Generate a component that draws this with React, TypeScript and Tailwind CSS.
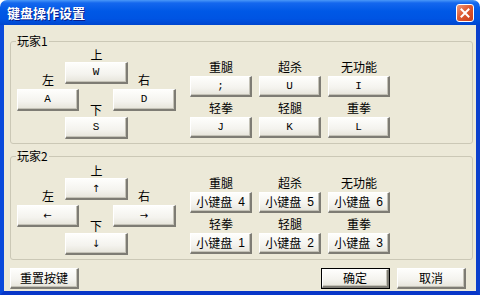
import React from "react";

const CJK = "font-['Noto_Sans_CJK_SC','Noto_Sans',sans-serif]";

function Btn({ children, w, h = "h-[22px]", mono = false }: { children: React.ReactNode; w: string; h?: string; mono?: boolean }) {
  return (
    <div
      className={`${w} ${h} flex items-center justify-center border border-r-2 border-b-2 border-t-white border-l-white border-r-[#7E7C74] border-b-[#7E7C74] bg-[linear-gradient(180deg,#FEFEFC_0%,#F4F3EE_60%,#E6E4DA_100%)] text-black ${
        mono ? "font-['Liberation_Mono',monospace] text-[11px]" : `${CJK} text-[12px]`
      } leading-none shadow-[inset_-1px_-1px_0_#C4C2B7]`}
    >
      {children}
    </div>
  );
}

function Arrow({ ch }: { ch: string }) {
  return <span className="font-['DejaVu_Sans',sans-serif] text-[10px] leading-none">{ch}</span>;
}

function Pad({ n }: { n: string }) {
  return (
    <span className="flex items-center">
      <span>小键盘</span>
      <span className="ml-[6px] font-['Liberation_Sans',sans-serif] text-[12px]">{n}</span>
    </span>
  );
}

type Keys = {
  up: React.ReactNode;
  left: React.ReactNode;
  right: React.ReactNode;
  down: React.ReactNode;
  grid: React.ReactNode[];
  mono: boolean;
};

function Group({ title, keys, pt, extraClass = "" }: { title: string; keys: Keys; pt: string; extraClass?: string }) {
  const labels1 = ["重腿", "超杀", "无功能"];
  const labels2 = ["轻拳", "轻腿", "重拳"];
  return (
    <fieldset className={`border border-[#CBC8B6] rounded-[3px] ${extraClass}`}>
      <legend className={`ml-[5px] px-[1px] text-[12px] leading-[14px] text-black ${CJK}`}>{title}</legend>
      <div className={`flex ${pt} pb-[4px] pl-[6px]`}>
        <div className={`w-[159px] flex flex-col text-[12px] ${CJK} text-black`}>
          <div className="h-[14px] leading-[14px] text-center">上</div>
          <div className="flex items-end h-[22px]">
            <div className="w-[48px] pl-[25px] h-[14px] leading-[14px] translate-y-[3px]">左</div>
            <Btn w="w-[63px]" mono={keys.mono}>{keys.up}</Btn>
            <div className="w-[48px] pl-[10px] h-[14px] leading-[14px] translate-y-[3px]">右</div>
          </div>
          <div className="flex items-end mt-[5px]">
            <Btn w="w-[62px]" mono={keys.mono}>{keys.left}</Btn>
            <div className="w-[34px] text-center h-[14px] leading-[14px] translate-y-[6px]">下</div>
            <Btn w="w-[63px]" mono={keys.mono}>{keys.right}</Btn>
          </div>
          <div className="flex mt-[6px] pl-[48px]">
            <Btn w="w-[63px]" mono={keys.mono}>{keys.down}</Btn>
          </div>
        </div>
        <div className={`ml-[14px] mt-[12px] flex flex-col text-[12px] ${CJK} text-black`}>
          <div className="grid grid-cols-[62px_62px_62px] gap-x-[7px]">
            {labels1.map((l) => (
              <div key={l} className="h-[14px] leading-[14px] text-center">{l}</div>
            ))}
            {keys.grid.slice(0, 3).map((k, i) => (
              <div key={i} className="mt-[2px]">
                <Btn w="w-[62px]" h="h-[21px]" mono={keys.mono}>{k}</Btn>
              </div>
            ))}
          </div>
          <div className="grid grid-cols-[62px_62px_62px] gap-x-[7px] mt-[4px]">
            {labels2.map((l) => (
              <div key={l} className="h-[14px] leading-[14px] text-center">{l}</div>
            ))}
            {keys.grid.slice(3, 6).map((k, i) => (
              <div key={i} className="mt-[2px]">
                <Btn w="w-[62px]" h="h-[21px]" mono={keys.mono}>{k}</Btn>
              </div>
            ))}
          </div>
        </div>
      </div>
    </fieldset>
  );
}

export default function App() {
  const p1: Keys = { up: "W", left: "A", right: "D", down: "S", grid: [";", "U", "I", "J", "K", "L"], mono: true };
  const p2: Keys = {
    up: <Arrow ch="↑" />,
    left: <Arrow ch="←" />,
    right: <Arrow ch="→" />,
    down: <Arrow ch="↓" />,
    grid: [<Pad n="4" />, <Pad n="5" />, <Pad n="6" />, <Pad n="1" />, <Pad n="2" />, <Pad n="3" />],
    mono: false,
  };
  return (
    <div className="w-[480px] h-[295px] bg-white flex flex-col overflow-hidden">
      <div className="h-[25px] shrink-0 rounded-t-[7px] flex items-center justify-between pl-[7px] pr-[6px] bg-[linear-gradient(180deg,#4A98F8_0%,#1467EE_12%,#0058E6_45%,#0054E3_75%,#0046CF_100%)]">
        <span className={`text-white font-bold text-[13px] leading-none ${CJK} [text-shadow:1px_1px_0_#0A1E8A]`}>键盘操作设置</span>
        <div className="w-[18px] h-[18px] rounded-[3px] border border-white bg-[linear-gradient(135deg,#EE9A7E_0%,#DE5A33_45%,#C83E1A_100%)] flex items-center justify-center">
          <svg width="10" height="10" viewBox="0 0 10 10">
            <path d="M1.5 1.5 L8.5 8.5 M8.5 1.5 L1.5 8.5" stroke="white" strokeWidth="2" strokeLinecap="square" />
          </svg>
        </div>
      </div>
      <div className="flex-1 flex flex-col border-x-4 border-b-4 border-l-[#0A4ADB] border-r-[#0A3FCC] border-b-[#0836C8] bg-[#ECE9D8] pl-[6px] pr-[3px] pt-[9px] pb-[2px]">
        <Group title="玩家1" keys={p1} pt="pt-0" />
        <Group title="玩家2" keys={p2} pt="pt-[1px]" extraClass="mt-[5px]" />
        <div className={`flex mt-[8px] pr-[7px] text-[12px] ${CJK}`}>
          <Btn w="w-[69px]" h="h-[21px]">重置按键</Btn>
          <div className="flex-1" />
          <div className="w-[69px] h-[21px] border border-black flex">
            <Btn w="w-[67px]" h="h-[19px]">确定</Btn>
          </div>
          <div className="ml-[7px]">
            <Btn w="w-[69px]" h="h-[21px]">取消</Btn>
          </div>
        </div>
      </div>
    </div>
  );
}
